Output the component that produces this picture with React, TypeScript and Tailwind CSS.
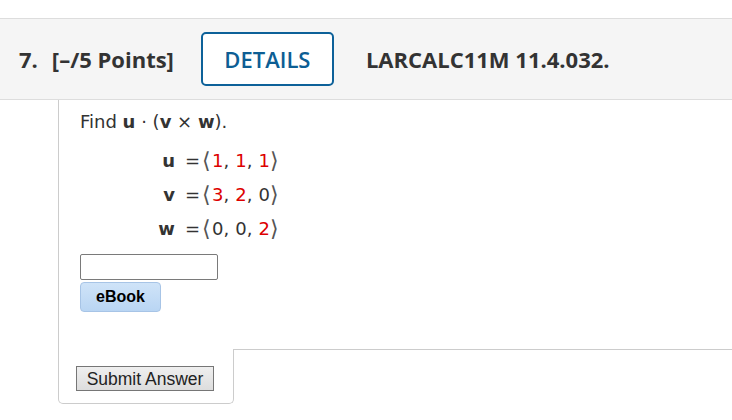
import React from "react";

const mathRows: { name: string; vals: { v: string; red: boolean }[] }[] = [
  { name: "u", vals: [{ v: "1", red: true }, { v: "1", red: true }, { v: "1", red: true }] },
  { name: "v", vals: [{ v: "3", red: true }, { v: "2", red: true }, { v: "0", red: false }] },
  { name: "w", vals: [{ v: "0", red: false }, { v: "0", red: false }, { v: "2", red: true }] },
];

export default function App() {
  return (
    <div className="w-[732px] h-[420px] bg-white overflow-hidden pt-[18px]">
      {/* question header */}
      <div className="h-[82px] border-y border-[#dddddd] bg-[#f5f5f5] flex items-center pl-[19px] text-[#333333] font-['Open_Sans',sans-serif] font-bold text-[22px]">
        <span>7.</span>
        <span className="ml-[14px]">[–/5 Points]</span>
        <button className="ml-[27px] w-[133px] h-[54px] shrink-0 rounded-[5px] border-2 border-[#0d6199] bg-white text-[#0d5e94] font-semibold text-[22px]">
          DETAILS
        </button>
        <span className="ml-[32px]">LARCALC11M 11.4.032.</span>
      </div>

      {/* question body */}
      <div className="ml-[58px] border-l border-[#cccccc] h-[249px] pl-[21px] pt-[10px] font-['DejaVu_Sans',Verdana,sans-serif] text-[#333333]">
        <p className="text-[18px] leading-[24px]">
          Find <b>u</b> · (<b>v</b> × <b>w</b>).
        </p>
        <div className="mt-[12px] flex flex-col gap-[5px] text-[18px]">
          {mathRows.map((r) => (
            <div key={r.name} className="flex items-center h-[29px]">
              <span className="w-[95px] text-right font-bold">{r.name}</span>
              <span className="ml-[10px]">=</span>
              <span className="ml-[2px] text-[22px] font-light text-[#555] leading-none">⟨</span>
              <span className="ml-[1px] flex">
                {r.vals.map((x, i) => (
                  <span key={i} className="flex">
                    <span className={x.red ? "text-[#dd0000]" : ""}>{x.v}</span>
                    {i < 2 && <span className="mr-[6px]">,</span>}
                  </span>
                ))}
              </span>
              <span className="ml-[0px] text-[22px] font-light text-[#555] leading-none">⟩</span>
            </div>
          ))}
        </div>
        <div className="mt-[11px] w-[138px] h-[26px] border border-[#7a7a7a] rounded-[2px] bg-white" />
        <button className="mt-[2px] w-[81px] h-[30px] rounded-[4px] border border-[#a7c4e6] bg-gradient-to-b from-[#cfe3f8] to-[#b9d5f3] font-['Liberation_Sans',Arial,sans-serif] font-bold text-[16px] text-black">
          eBook
        </button>
      </div>

      {/* bottom row */}
      <div className="flex">
        <div className="ml-[58px] w-[176px] h-[55px] border-x border-b border-[#cccccc] rounded-b-[5px] pt-[17px] pl-[17px]">
          <button className="w-[138px] h-[25px] border border-[#767676] bg-gradient-to-b from-[#efefef] to-[#dddddd] font-['Liberation_Sans',Arial,sans-serif] text-[17.5px] leading-[20px] text-[#222]">
            Submit Answer
          </button>
        </div>
        <div className="flex-1 border-t border-[#cccccc]" />
      </div>
    </div>
  );
}
